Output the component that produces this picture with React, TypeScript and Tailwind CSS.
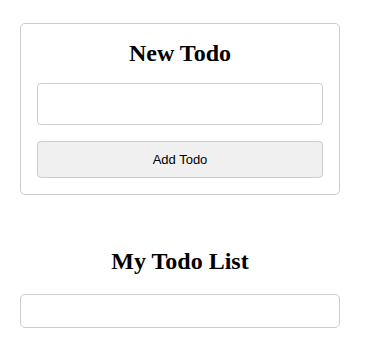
import React from "react";

export default function App() {
  return (
    <div className="bg-white min-h-[357px] w-[365px] pt-[23px]">
      <div className="ml-[20px] w-[320px]">
        <div className="border border-[#cccccc] rounded-[5px] px-[16px] pt-[16px] pb-[16px]">
          <h2
            className="text-center font-bold text-[24px] leading-[27px] text-black mb-[16px]"
            style={{ fontFamily: '"Liberation Serif", "Times New Roman", serif' }}
          >
            New Todo
          </h2>
          <input
            type="text"
            className="block w-full h-[42px] border border-[#cccccc] rounded-[4px] bg-white outline-none"
          />
          <button
            className="block w-full h-[37px] mt-[16px] border border-[#cccccc] rounded-[4px] bg-[#f0f0f0] text-[13px] text-black"
            style={{ fontFamily: '"Liberation Sans", Arial, sans-serif' }}
          >
            Add Todo
          </button>
        </div>
        <h2
          className="text-center font-bold text-[24px] leading-[27px] text-black mt-[53px] mb-[19px]"
          style={{ fontFamily: '"Liberation Serif", "Times New Roman", serif' }}
        >
          My Todo List
        </h2>
        <div className="border border-[#cccccc] rounded-[5px] h-[34px]"></div>
      </div>
    </div>
  );
}
